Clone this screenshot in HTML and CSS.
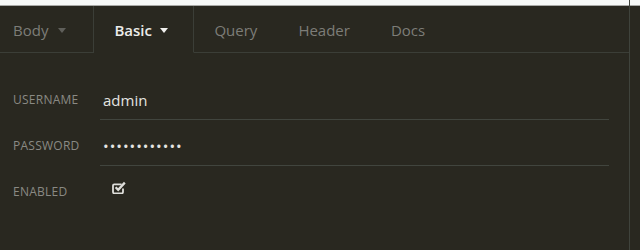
FILE: index.html
```html
<!DOCTYPE html>
<html>
<head>
<meta charset="utf-8">
<link rel="stylesheet" href="styles.css">
</head>
<body>
<div class="app">
  <div class="pane">
    <div class="strip"></div>
    <div class="tabs">
      <div class="tab tab-first">Body<span class="caret"></span></div>
      <div class="tab tab-active">Basic<span class="caret"></span></div>
      <div class="tab tab-plain">Query</div>
      <div class="tab tab-plain">Header</div>
      <div class="tab tab-plain">Docs</div>
      <div class="tab-fill"></div>
    </div>
    <div class="form">
      <div class="row">
        <div class="label">Username</div>
        <div class="field">admin</div>
      </div>
      <div class="row">
        <div class="label">Password</div>
        <div class="field field-pass">••••••••••••</div>
      </div>
      <div class="row">
        <div class="label">Enabled</div>
        <div class="check">
          <svg width="14" height="13" viewBox="0 0 14 13">
            <path d="M9.6 3.4H2.2a1.2 1.2 0 0 0-1.2 1.2v6.5a1.2 1.2 0 0 0 1.2 1.2h7.6a1.2 1.2 0 0 0 1.2-1.2V7.6" fill="none" stroke="#dededa" stroke-width="1.8"/>
            <path d="M3.6 6.2l2.6 2.6L12.8 1.6" fill="none" stroke="#dededa" stroke-width="2.3"/>
          </svg>
        </div>
      </div>
    </div>
  </div>
  <div class="side">
    <div class="strip"></div>
  </div>
</div>
</body>
</html>
```

FILE: styles.css
```css
html, body {
  margin: 0;
  padding: 0;
  background: #292820;
  height: 100%;
}

body {
  font-family: "Open Sans", "Liberation Sans", sans-serif;
  overflow: hidden;
}

.app {
  display: flex;
  height: 250px;
}

.pane {
  width: 629px;
  border-right: 1px solid #3f433c;
  display: flex;
  flex-direction: column;
}

.side {
  flex: 1;
  display: flex;
  flex-direction: column;
}

.strip {
  height: 5px;
  background: #f7f9f8;
  border-bottom: 1px solid #a9aaa7;
}

.tabs {
  display: flex;
  height: 47px;
}

.tab {
  display: flex;
  align-items: center;
  height: 45px;
  padding: 1px 20px 0;
  font-size: 15px;
  color: #7d7d78;
  border-bottom: 1px solid #3b3e37;
  white-space: nowrap;
}

.tab-first {
  padding-left: 13px;
  padding-right: 22px;
  border-right: 1px solid #3b3e37;
}

.tab-active {
  color: #ececea;
  font-weight: 600;
  padding-right: 20px;
  border-right: 1px solid #3b3e37;
  border-bottom-color: transparent;
}

.tab-plain {
  padding: 1px 20.5px 0;
}

.tab-fill {
  flex: 1;
  border-bottom: 1px solid #3b3e37;
}

.caret {
  width: 0;
  height: 0;
  margin: 1px 5px 0 10px;
  border-left: 4.5px solid transparent;
  border-right: 4.5px solid transparent;
  border-top: 5px solid #5f5f5a;
}

.tab-active .caret {
  border-top-color: #f0f0ee;
  margin-left: 8px;
}

.form {
  padding: 36px 20px 0 13px;
  display: flex;
  flex-direction: column;
  gap: 15px;
}

.row {
  display: flex;
  align-items: flex-start;
}

.label {
  width: 87px;
  flex: none;
  font-size: 12px;
  letter-spacing: 0.25px;
  line-height: 22px;
  text-transform: uppercase;
  color: #8a8a84;
}

.field {
  flex: 1;
  height: 22px;
  line-height: 22px;
  padding: 0 3px 8px;
  font-size: 15px;
  color: #e4e4e1;
  border-bottom: 1px solid #41453e;
}

.field-pass {
  font-size: 15px;
  letter-spacing: 1px;
  line-height: 22px;
  height: 22px;
}

.check {
  padding: 0 0 0 12px;
  height: 13px;
}

.check svg {
  display: block;
}
```
